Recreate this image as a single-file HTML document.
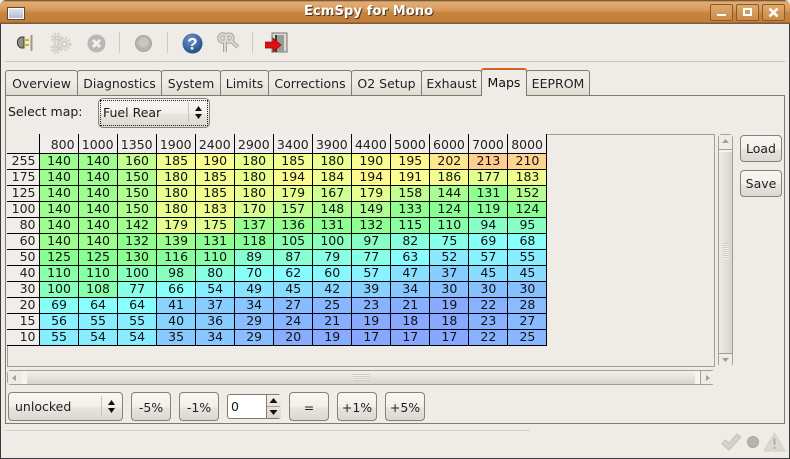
<!DOCTYPE html>
<html><head><meta charset="utf-8"><title>EcmSpy for Mono</title>
<style>
html,body{margin:0;padding:0;background:#333}
#w{position:relative;width:790px;height:459px;overflow:hidden;background:#efebe7;font:12.5px "DejaVu Sans","Liberation Sans",sans-serif;color:#1a1a1a}
#w div,#w svg,#w table{position:absolute}
.btn{box-sizing:border-box;border:1px solid #8a8174;border-radius:4px;background:linear-gradient(#f8f6f3 0,#f3f0ec 50%,#e8e4de 55%,#ddd8d1 100%);text-align:center;line-height:25px;color:#222}
.tab{box-sizing:border-box;top:70px;height:26px;border:1px solid #85796c;border-bottom:1px solid #85796c;border-radius:3px 3px 0 0;background:linear-gradient(#efebe7 0,#efebe7 50%,#dfdad4 100%);text-align:center;line-height:25px;color:#222}
table{border-collapse:collapse;table-layout:fixed;left:7px;top:134px;width:540px;font-size:12.5px}
td,th{box-sizing:border-box;height:16px;padding:0 0 0 1px;vertical-align:top;font-weight:400;text-align:center;line-height:14px;border:1px solid #000;color:#111;overflow:hidden;
background:rgb(clamp(136,calc(136 + (var(--v) - 128)*1.86),255),min(calc(136 + var(--v)*1.86),calc(255 - (var(--v) - 192)*2.4),255),clamp(144,calc(255 - (var(--v) - 64)*1.86),255))}
th{background:#f0edea;color:#222;text-align:right;padding:0 3px 0 0}
tr:first-child th{border-top:0;height:19px;line-height:17px;padding:2px 3px 0 0;text-align:right}
tr:first-child th:first-child{border-left:0;background:#efebe7}
tr th:first-child{border-left:0;width:32px}
</style></head><body>
<div id="w">
<!-- title bar -->
<div style="left:0;top:0;width:790px;height:24px;border-radius:6px 6px 0 0;background:linear-gradient(#5a4026 0,#e3ad72 2px,#d9995a 10px,#c6833e 13px,#c27f3b 22px,#7d5a33 23px,#7d5a33 24px)"></div>
<div style="left:8px;top:8px;width:14px;height:9px;background:linear-gradient(#dfe3ee,#b6bdd0);border:1px solid #fff;outline:1px solid #5c4a35"></div>
<div style="left:304px;top:4px;font-weight:700;font-size:13px;line-height:16px;color:#fff;text-shadow:1px 1px 0 #4a3520;letter-spacing:.13px">EcmSpy for Mono</div>
<div style="left:710px;top:4px;width:23px;height:17px;box-sizing:border-box;border:1px solid #8a5a28;border-radius:2px;background:linear-gradient(#e0a96c,#c98a46)"></div>
<div style="left:736px;top:4px;width:23px;height:17px;box-sizing:border-box;border:1px solid #8a5a28;border-radius:2px;background:linear-gradient(#e0a96c,#c98a46)"></div>
<div style="left:762px;top:4px;width:23px;height:17px;box-sizing:border-box;border:1px solid #8a5a28;border-radius:2px;background:linear-gradient(#e0a96c,#c98a46)"></div>
<div style="left:717px;top:14px;width:9px;height:2px;background:#fff"></div>
<div style="left:743px;top:8px;width:9px;height:8px;box-sizing:border-box;border:2px solid #fff;border-top-width:2px"></div>
<svg style="left:768px;top:7px" width="11" height="11"><path d="M1.5 1.5L9.5 9.5M9.5 1.5L1.5 9.5" stroke="#fff" stroke-width="2.6"/></svg>
<!-- window edges -->
<div style="left:0;top:24px;width:1px;height:435px;background:#3a3a3a"></div>
<div style="left:789px;top:24px;width:1px;height:435px;background:#3a3a3a"></div>
<div style="left:0;top:458px;width:790px;height:1px;background:#3a3a3a"></div>
<div style="left:5px;top:61px;width:780px;height:1px;background:#c9c2b8"></div>
<!-- toolbar icons -->
<svg style="left:14px;top:33px" width="20" height="20"><path d="M10 4H7A6 6 0 0 0 7 15H10Z" fill="#8f9089" stroke="#3d3d38"/><path d="M10 7H15M10 12H15" stroke="#d2b21e" stroke-width="2"/><path d="M17.5 2V18" stroke="#9a9a90" stroke-width="2"/></svg>
<svg style="left:50px;top:32px" width="22" height="22"><g fill="#dedbd6"><circle cx="6.5" cy="6" r="3.6"/><circle cx="14.5" cy="12" r="5"/><circle cx="6" cy="16.5" r="3.6"/></g><g fill="none" stroke="#d0ccc6" stroke-width="2" stroke-dasharray="2 1.6"><circle cx="6.5" cy="6" r="4.4"/><circle cx="14.5" cy="12" r="6"/><circle cx="6" cy="16.5" r="4.4"/></g><g fill="#efebe7" stroke="#c0bcb6" stroke-width=".8"><circle cx="6.5" cy="6" r="1.6"/><circle cx="14.5" cy="12" r="2.2"/><circle cx="6" cy="16.5" r="1.6"/></g></svg>
<svg style="left:87px;top:34px" width="19" height="19"><circle cx="9.5" cy="9.5" r="9" fill="#bdb8b3"/><path d="M6 6L13 13M13 6L6 13" stroke="#f3f1ee" stroke-width="3"/></svg>
<div style="left:119px;top:32px;width:1px;height:21px;background:#cfcac3"></div>
<svg style="left:135px;top:35px" width="18" height="18"><circle cx="8.5" cy="8.5" r="8" fill="#b8b3ae" stroke="#a8a39e"/><circle cx="8.5" cy="7.5" r="5" fill="#c9c5c0"/></svg>
<div style="left:167px;top:32px;width:1px;height:21px;background:#cfcac3"></div>
<svg style="left:182px;top:33px" width="21" height="21"><defs><radialGradient id="q" cx=".4" cy=".3" r=".8"><stop offset="0" stop-color="#6d97d0"/><stop offset="1" stop-color="#1c4280"/></radialGradient></defs><circle cx="10.5" cy="10.5" r="10" fill="url(#q)"/><text x="10.5" y="16.5" text-anchor="middle" font-family="Liberation Sans" font-weight="700" font-size="17" fill="#fff">?</text></svg>
<svg style="left:217px;top:32px" width="22" height="22" fill="none"><g stroke="#a9a59f" stroke-width="4"><circle cx="6" cy="6" r="3.8"/><circle cx="12" cy="6" r="3.6"/><path d="M8 10V20M14 9L21 15"/></g><g stroke="#dedbd6" stroke-width="2"><circle cx="6" cy="6" r="3.8"/><circle cx="12" cy="6" r="3.6"/><path d="M8 10V20M14 9L21 15"/></g></svg>
<div style="left:252px;top:32px;width:1px;height:21px;background:#cfcac3"></div>
<svg style="left:265px;top:32px" width="23" height="22"><path d="M7 1H22V20H7Z" fill="#dcdad6" stroke="#77746e"/><path d="M10 3H19V20H10Z" fill="#3a3a3a"/><path d="M12 3H19V20H12Z" fill="#9a9a96"/><path d="M0 10H8V6L16 13L8 20V16H0Z" fill="#e01010" stroke="#8e0808" stroke-width=".7"/></svg>
<!-- notebook panel -->
<div style="left:5px;top:95px;width:780px;height:329px;box-sizing:border-box;border:1px solid #85796c"></div>
<div class="tab" style="left:5px;width:73px">Overview</div>
<div class="tab" style="left:77px;width:85px">Diagnostics</div>
<div class="tab" style="left:161px;width:60px">System</div>
<div class="tab" style="left:220px;width:49px">Limits</div>
<div class="tab" style="left:268px;width:84px">Corrections</div>
<div class="tab" style="left:351px;width:71px">O2 Setup</div>
<div class="tab" style="left:421px;width:61px">Exhaust</div>
<div class="tab" style="left:526px;width:64px">EEPROM</div>
<div style="box-sizing:border-box;left:481px;top:68px;width:46px;height:28px;border:1px solid #85796c;border-top:2px solid #d0661c;border-bottom:0;border-radius:3px 3px 0 0;background:#efebe7;text-align:center;line-height:26px;color:#111">Maps</div>
<!-- select map -->
<div style="left:8px;top:104px;line-height:16px">Select map:</div>
<div class="btn" style="left:98px;top:98px;width:112px;height:30px;border-radius:5px"></div>
<div style="left:100px;top:100px;width:108px;height:26px;box-sizing:border-box;border:1px dotted #222"></div>
<div style="left:103px;top:104px;line-height:17px">Fuel Rear</div>
<div style="left:188px;top:102px;width:1px;height:20px;background:#c9c4bc"></div>
<svg style="left:194px;top:105px" width="9" height="15" fill="#111"><path d="M4.5 1L8 6H1ZM4.5 14L8 9H1Z"/></svg>
<!-- table frame -->
<div style="left:7px;top:134px;width:708px;height:233px;box-sizing:border-box;border:1px solid #a89e90;border-left-color:#a89e90"></div>
<table>
<colgroup><col style="width:32px"><col span="13" style="width:39px"></colgroup>
<tr><th></th><th>800</th><th>1000</th><th>1350</th><th>1900</th><th>2400</th><th>2900</th><th>3400</th><th>3900</th><th>4400</th><th>5000</th><th>6000</th><th>7000</th><th>8000</th></tr>
<tr><th>255</th><td style="--v:140">140</td><td style="--v:140">140</td><td style="--v:160">160</td><td style="--v:185">185</td><td style="--v:190">190</td><td style="--v:180">180</td><td style="--v:185">185</td><td style="--v:180">180</td><td style="--v:190">190</td><td style="--v:195">195</td><td style="--v:202">202</td><td style="--v:213">213</td><td style="--v:210">210</td></tr>
<tr><th>175</th><td style="--v:140">140</td><td style="--v:140">140</td><td style="--v:150">150</td><td style="--v:180">180</td><td style="--v:185">185</td><td style="--v:180">180</td><td style="--v:194">194</td><td style="--v:184">184</td><td style="--v:194">194</td><td style="--v:191">191</td><td style="--v:186">186</td><td style="--v:177">177</td><td style="--v:183">183</td></tr>
<tr><th>125</th><td style="--v:140">140</td><td style="--v:140">140</td><td style="--v:150">150</td><td style="--v:180">180</td><td style="--v:185">185</td><td style="--v:180">180</td><td style="--v:179">179</td><td style="--v:167">167</td><td style="--v:179">179</td><td style="--v:158">158</td><td style="--v:144">144</td><td style="--v:131">131</td><td style="--v:152">152</td></tr>
<tr><th>100</th><td style="--v:140">140</td><td style="--v:140">140</td><td style="--v:150">150</td><td style="--v:180">180</td><td style="--v:183">183</td><td style="--v:170">170</td><td style="--v:157">157</td><td style="--v:148">148</td><td style="--v:149">149</td><td style="--v:133">133</td><td style="--v:124">124</td><td style="--v:119">119</td><td style="--v:124">124</td></tr>
<tr><th>80</th><td style="--v:140">140</td><td style="--v:140">140</td><td style="--v:142">142</td><td style="--v:179">179</td><td style="--v:175">175</td><td style="--v:137">137</td><td style="--v:136">136</td><td style="--v:131">131</td><td style="--v:132">132</td><td style="--v:115">115</td><td style="--v:110">110</td><td style="--v:94">94</td><td style="--v:95">95</td></tr>
<tr><th>60</th><td style="--v:140">140</td><td style="--v:140">140</td><td style="--v:132">132</td><td style="--v:139">139</td><td style="--v:131">131</td><td style="--v:118">118</td><td style="--v:105">105</td><td style="--v:100">100</td><td style="--v:97">97</td><td style="--v:82">82</td><td style="--v:75">75</td><td style="--v:69">69</td><td style="--v:68">68</td></tr>
<tr><th>50</th><td style="--v:125">125</td><td style="--v:125">125</td><td style="--v:130">130</td><td style="--v:116">116</td><td style="--v:110">110</td><td style="--v:89">89</td><td style="--v:87">87</td><td style="--v:79">79</td><td style="--v:77">77</td><td style="--v:63">63</td><td style="--v:52">52</td><td style="--v:57">57</td><td style="--v:55">55</td></tr>
<tr><th>40</th><td style="--v:110">110</td><td style="--v:110">110</td><td style="--v:100">100</td><td style="--v:98">98</td><td style="--v:80">80</td><td style="--v:70">70</td><td style="--v:62">62</td><td style="--v:60">60</td><td style="--v:57">57</td><td style="--v:47">47</td><td style="--v:37">37</td><td style="--v:45">45</td><td style="--v:45">45</td></tr>
<tr><th>30</th><td style="--v:100">100</td><td style="--v:108">108</td><td style="--v:77">77</td><td style="--v:66">66</td><td style="--v:54">54</td><td style="--v:49">49</td><td style="--v:45">45</td><td style="--v:42">42</td><td style="--v:39">39</td><td style="--v:34">34</td><td style="--v:30">30</td><td style="--v:30">30</td><td style="--v:30">30</td></tr>
<tr><th>20</th><td style="--v:69">69</td><td style="--v:64">64</td><td style="--v:64">64</td><td style="--v:41">41</td><td style="--v:37">37</td><td style="--v:34">34</td><td style="--v:27">27</td><td style="--v:25">25</td><td style="--v:23">23</td><td style="--v:21">21</td><td style="--v:19">19</td><td style="--v:22">22</td><td style="--v:28">28</td></tr>
<tr><th>15</th><td style="--v:56">56</td><td style="--v:55">55</td><td style="--v:55">55</td><td style="--v:40">40</td><td style="--v:36">36</td><td style="--v:29">29</td><td style="--v:24">24</td><td style="--v:21">21</td><td style="--v:19">19</td><td style="--v:18">18</td><td style="--v:18">18</td><td style="--v:23">23</td><td style="--v:27">27</td></tr>
<tr><th>10</th><td style="--v:55">55</td><td style="--v:54">54</td><td style="--v:54">54</td><td style="--v:35">35</td><td style="--v:34">34</td><td style="--v:29">29</td><td style="--v:20">20</td><td style="--v:19">19</td><td style="--v:17">17</td><td style="--v:17">17</td><td style="--v:17">17</td><td style="--v:22">22</td><td style="--v:25">25</td></tr>
</table>
<!-- vertical scrollbar -->
<div style="left:718px;top:134px;width:15px;height:233px;box-sizing:border-box;border:1px solid #a89e90;border-radius:4px;background:linear-gradient(90deg,#efebe7,#d8d3cc)"></div>
<div style="left:719px;top:135px;width:13px;height:14px;background:#efebe7;border-bottom:1px solid #a89e90"></div>
<div style="left:719px;top:353px;width:13px;height:13px;background:#efebe7;border-top:1px solid #a89e90"></div>
<svg style="left:721px;top:138px" width="9" height="6"><path d="M4.5 1L8 5H1Z" fill="#a89e90"/></svg>
<svg style="left:721px;top:357px" width="9" height="6"><path d="M4.5 5L8 1H1Z" fill="#a89e90"/></svg>
<div style="left:719px;top:150px;width:13px;height:2px;background:#f6f4f1"></div>
<div style="left:723px;top:243px;width:6px;height:16px;background:repeating-linear-gradient(#cfcac3 0 1px,#f3f1ee 1px 2px)"></div>
<!-- horizontal scrollbar -->
<div style="left:7px;top:370px;width:708px;height:15px;box-sizing:border-box;border:1px solid #a89e90;border-radius:4px;background:linear-gradient(#f3f1ee,#d8d3cc)"></div>
<div style="left:8px;top:371px;width:14px;height:13px;background:#efebe7;border-right:1px solid #c4bdb3"></div>
<div style="left:700px;top:371px;width:14px;height:13px;background:#efebe7;border-left:1px solid #a89e90"></div>
<svg style="left:11px;top:374px" width="6" height="8"><path d="M1 4L5 1V7Z" fill="#a89e90"/></svg>
<svg style="left:705px;top:374px" width="6" height="8"><path d="M5 4L1 1V7Z" fill="#a89e90"/></svg>
<div style="left:22px;top:371px;width:5px;height:13px;background:#f6f4f1"></div>
<div style="left:695px;top:371px;width:5px;height:13px;background:#f6f4f1"></div>
<div style="left:353px;top:374px;width:17px;height:7px;background:repeating-linear-gradient(#cfcac3 0 1px,#f3f1ee 1px 2px)"></div>
<!-- load / save -->
<div class="btn" style="left:740px;top:135px;width:42px;height:27px">Load</div>
<div class="btn" style="left:740px;top:170px;width:42px;height:27px">Save</div>
<!-- bottom controls -->
<div class="btn" style="left:8px;top:392px;width:115px;height:29px;text-align:left;padding-left:6px;line-height:28px">unlocked</div>
<div style="left:101px;top:396px;width:1px;height:20px;background:#c9c4bc"></div>
<svg style="left:107px;top:399px" width="9" height="15" fill="#111"><path d="M4.5 1L8 6H1ZM4.5 14L8 9H1Z"/></svg>
<div class="btn" style="left:131px;top:392px;width:40px;height:29px;line-height:29px">-5%</div>
<div class="btn" style="left:179px;top:392px;width:40px;height:29px;line-height:29px">-1%</div>
<div style="left:227px;top:394px;width:54px;height:25px;box-sizing:border-box;border:1px solid #85796c;border-radius:3px;background:#fff"></div>
<div style="left:231px;top:398px;line-height:17px">0</div>
<div style="left:266px;top:395px;width:14px;height:23px;background:linear-gradient(#f3f1ee,#dcd7d0);border-left:1px solid #85796c"></div>
<div style="left:267px;top:406px;width:13px;height:1px;background:#a89e90"></div>
<svg style="left:268px;top:397px" width="11" height="19" fill="#111"><path d="M5.5 1L9.5 6H1.5ZM5.5 18L9.5 13H1.5Z"/></svg>
<div class="btn" style="left:289px;top:392px;width:40px;height:29px;line-height:29px">=</div>
<div class="btn" style="left:337px;top:392px;width:40px;height:29px;line-height:29px">+1%</div>
<div class="btn" style="left:385px;top:392px;width:40px;height:29px;line-height:29px">+5%</div>
<!-- status bar -->
<div style="left:5px;top:430px;width:525px;height:1px;background:#d5cfc6"></div>
<svg style="left:720px;top:432px" width="22" height="20"><path d="M2 12L9 18L21 5L17 2L9 11L5 8Z" fill="#d5d1cb" stroke="#c6c1ba"/></svg>
<svg style="left:746px;top:435px" width="14" height="14"><circle cx="7" cy="7" r="5.5" fill="#b8b3ae" stroke="#aaa59f"/></svg>
<svg style="left:763px;top:432px" width="23" height="20"><path d="M11.5 1L22 19H1Z" fill="#dcd8d2" stroke="#d2cdc6"/><path d="M11.5 6V13M11.5 15V17" stroke="#b5b0a9" stroke-width="2"/></svg>
</div>
</body></html>
